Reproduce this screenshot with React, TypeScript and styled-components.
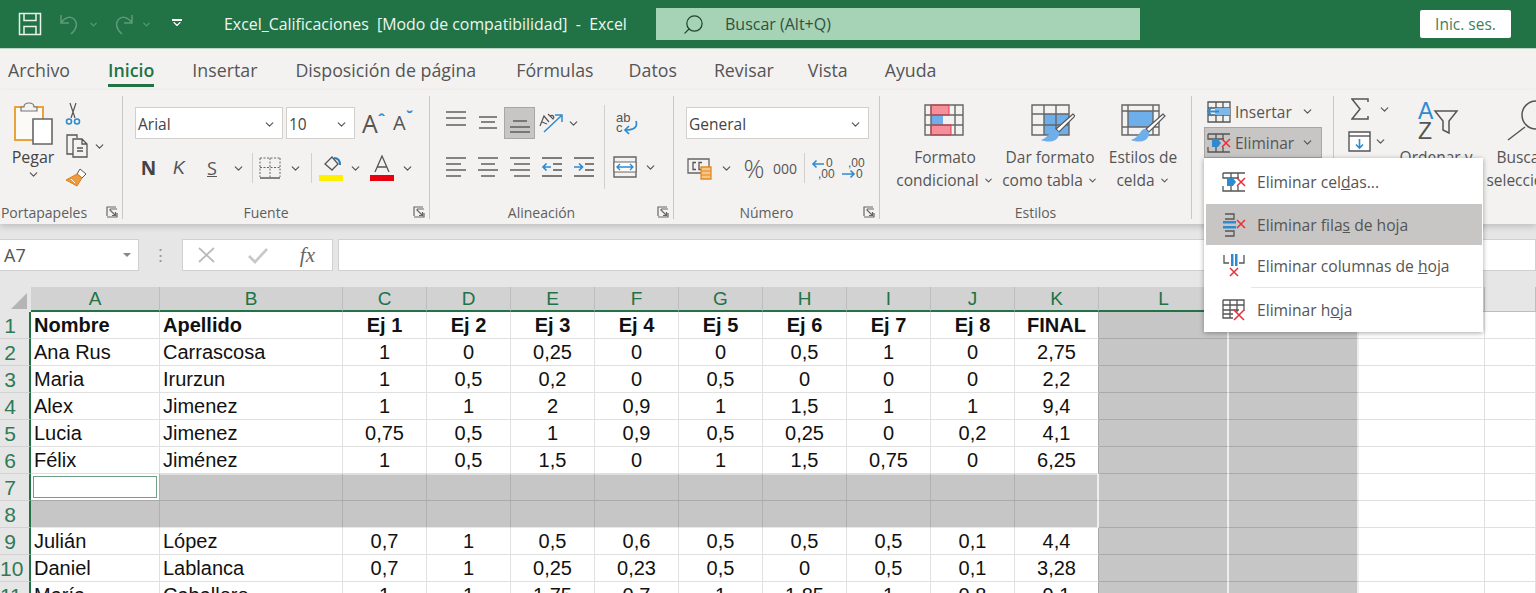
import React from 'react'
import styled, { createGlobalStyle } from 'styled-components'
import { ChevronDown, Search } from 'lucide-react'

const UI = `"Open Sans", "Noto Sans", sans-serif`

const GlobalStyle = createGlobalStyle`
  html, body {
    margin: 0;
    height: 593px;
    overflow: hidden;
    background: #fff;
  }
  body {
    font-family: ${UI};
    color: #444;
  }
  * { box-sizing: border-box; }
`

// M and O sit under the menu or past the visible header in the reference
const columns = [
  { name: 'A', width: 129, on: true },
  { name: 'B', width: 183, on: true },
  { name: 'C', width: 84, on: true },
  { name: 'D', width: 84, on: true },
  { name: 'E', width: 84, on: true },
  { name: 'F', width: 84, on: true },
  { name: 'G', width: 84, on: true },
  { name: 'H', width: 84, on: true },
  { name: 'I', width: 84, on: true },
  { name: 'J', width: 84, on: true },
  { name: 'K', width: 84, on: true },
  { name: 'L', width: 130, on: true },
  { name: '', width: 130, on: true },
  { name: '', width: 126, on: false },
  { name: '', width: 51, on: false },
]

const rows: string[][] = [
  ['Nombre', 'Apellido', 'Ej 1', 'Ej 2', 'Ej 3', 'Ej 4', 'Ej 5', 'Ej 6', 'Ej 7', 'Ej 8', 'FINAL'],
  ['Ana Rus', 'Carrascosa', '1', '0', '0,25', '0', '0', '0,5', '1', '0', '2,75'],
  ['Maria', 'Irurzun', '1', '0,5', '0,2', '0', '0,5', '0', '0', '0', '2,2'],
  ['Alex', 'Jimenez', '1', '1', '2', '0,9', '1', '1,5', '1', '1', '9,4'],
  ['Lucia', 'Jimenez', '0,75', '0,5', '1', '0,9', '0,5', '0,25', '0', '0,2', '4,1'],
  ['Félix', 'Jiménez', '1', '0,5', '1,5', '0', '1', '1,5', '0,75', '0', '6,25'],
  ['', '', '', '', '', '', '', '', '', '', ''],
  ['', '', '', '', '', '', '', '', '', '', ''],
  ['Julián', 'López', '0,7', '1', '0,5', '0,6', '0,5', '0,5', '0,5', '0,1', '4,4'],
  ['Daniel', 'Lablanca', '0,7', '1', '0,25', '0,23', '0,5', '0', '0,5', '0,1', '3,28'],
  ['María', 'Caballero', '1', '1', '1,75', '0,7', '1', '1,85', '1', '0,8', '9,1'],
]

const Chev = ({ size = 13, color = '#555' }: { size?: number; color?: string }) => (
  <ChevronDown size={size} color={color} strokeWidth={2.2} />
)

const Lines = ({ ys, xs }: { ys: number[]; xs: [number, number][] }) => (
  <svg width="24" height="24" viewBox="0 0 24 24" fill="none" stroke="#555" strokeWidth="1.4">
    {ys.map((y, i) => (
      <path key={y} d={`M${xs[i][0]} ${y}H${xs[i][1]}`} />
    ))}
  </svg>
)

const Launcher = () => (
  <svg width="12" height="12" viewBox="0 0 12 12" fill="none" stroke="#666" strokeWidth="1.2">
    <path d="M1 10V1h9M4 3h7M1 11h10v-4M3.500 3.500l6 6M9.500 6v3.500H6" />
  </svg>
)

const SaveIcon = () => (
  <svg width="24" height="24" viewBox="0 0 24 24" fill="none" stroke="#e8f3ec" strokeWidth="1.5">
    <path d="M1.500 1.500h21v21h-21zM6 1.500v7h12v-7M6 22.500v-8h12v8" />
  </svg>
)

const UndoIcon = ({ flip }: { flip?: boolean }) => (
  <svg width="24" height="24" viewBox="0 0 24 24" fill="none" stroke="#5f9b7a" strokeWidth="1.5" style={{ transform: flip ? 'scaleX(-1)' : undefined }}>
    <path d="M3 3v8h8M3 11c4-6 9-7 13-4 4 4 3 10-3 15" />
  </svg>
)

const ClipboardIcon = () => (
  <svg width="44" height="44" viewBox="-3 0 44 44" fill="none">
    <path d="M1 5h28v33H1z" fill="#fbfaf7" stroke="#e8a33d" strokeWidth="2" />
    <path d="M10 5c0-3 2-4 5-4s5 1 5 4h3v4H7V5z" fill="#f3f2f1" stroke="#777" strokeWidth="1.2" />
    <path d="M19 17h19v25H19z" fill="#fff" stroke="#666" strokeWidth="1.6" />
  </svg>
)

const ScissorsIcon = () => (
  <svg width="16" height="24" viewBox="0 0 16 24" fill="none" stroke="#555" strokeWidth="1.2">
    <path d="M5 1l5 15M11 1L6 16" />
    <circle cx="4" cy="19.500" r="2.500" stroke="#2e8bd0" strokeWidth="1.6" />
    <circle cx="12" cy="19.500" r="2.500" stroke="#2e8bd0" strokeWidth="1.6" />
  </svg>
)

const CopyIcon = () => (
  <svg width="24" height="24" viewBox="0 0 24 24" fill="none" stroke="#555" strokeWidth="1.3">
    <path d="M8 20H2V1h10v3" />
    <path d="M8 5h9l5 5v13H8zM17 5v5h5M12 14h6M12 17h6" fill="#f3f2f1" />
  </svg>
)

const BrushIcon = () => (
  <svg width="24" height="24" viewBox="0 0 24 24" fill="none">
    <path d="M15 3l6 5-4 4-5-4z" fill="#fff" stroke="#555" />
    <path d="M12 8l5 4-5 8-11-6z" fill="#ef9b3c" stroke="#d97f1e" />
    <path d="M6 13l4 4" stroke="#fff" />
  </svg>
)

const BordersIcon = () => (
  <svg width="22" height="22" viewBox="0 0 22 22" fill="none" stroke="#666" strokeWidth="1">
    <path d="M1 1h20M1 1v19M21 1v19M11 1v19M1 10.500h20" strokeDasharray="2 1.500" />
    <path d="M1 21h20" strokeWidth="1.600" />
  </svg>
)

const FillIcon = () => (
  <svg width="24" height="26" viewBox="0 0 24 26" fill="none">
    <path d="M6 9l7-7 6 7-6 6z" stroke="#555" strokeWidth="1.300" />
    <path d="M15 3c5 0 6 3 6 7" stroke="#2e7fc0" strokeWidth="2" />
    <path d="M0 20h24v6H0z" fill="#ffef00" />
  </svg>
)

const FontColorIcon = () => (
  <svg width="24" height="26" viewBox="0 0 24 26" fill="none" stroke="#555" strokeWidth="1.300">
    <path d="M5 17L12 1l7 16M7.500 12h9" />
    <path d="M0 20h24v6H0z" fill="#e8000f" stroke="none" />
  </svg>
)

const OrientationIcon = () => (
  <svg width="28" height="24" viewBox="0 0 28 24" fill="none">
    <path d="M7 21L24 5M18 4h7v7" stroke="#2e8bd0" strokeWidth="1.500" />
    <path d="M3 15l4-10 5 6M5 11l5 2M11 3l5 5c2-2 0-5-3-3" stroke="#555" strokeWidth="1.200" />
  </svg>
)

const IndentIcon = ({ right }: { right?: boolean }) => (
  <svg width="24" height="24" viewBox="0 0 24 24" fill="none" stroke="#555" strokeWidth="1.400">
    <path d="M2 3h20M13 9h9M13 15h9M2 21h20" />
    <path d={right ? 'M2 12h8M7 8.500l3.500 3.500L7 15.500' : 'M11 12H3M6.500 8.500L3 12l3.500 3.500'} stroke="#2e8bd0" strokeWidth="1.700" />
  </svg>
)

const WrapIcon = () => (
  <svg width="26" height="28" viewBox="0 -3 26 28" fill="none">
    <text x="1" y="10" fontFamily="Liberation Sans" fontSize="13" fill="#555">ab</text>
    <text x="1" y="20" fontFamily="Liberation Sans" fontSize="13" fill="#555">c</text>
    <path d="M21 9c2 6-2 9-10 9M14 14l-4 4 4 4" stroke="#2e8bd0" strokeWidth="1.700" />
  </svg>
)

const MergeIcon = () => (
  <svg width="24" height="24" viewBox="0 0 24 24" fill="none">
    <path d="M1 2h22v20H1z" stroke="#666" strokeWidth="1.400" />
    <path d="M1 7h22v10H1z" fill="#fff" stroke="#666" />
    <path d="M4 12h16M7 9l-3 3 3 3M17 9l3 3-3 3" stroke="#2e8bd0" strokeWidth="1.400" />
  </svg>
)

const AccountingIcon = () => (
  <svg width="26" height="24" viewBox="0 0 26 24" fill="none">
    <path d="M1 3h21v14H1z" stroke="#666" strokeWidth="1.300" />
    <path d="M9 6.500H6v7h3M15 6.500h-3v7h3" stroke="#555" strokeWidth="1.300" />
    <path d="M14 11h10v12H14z" fill="#f7c58a" stroke="#e08a1e" strokeWidth="1.300" />
    <path d="M14 15h10M14 19h10" stroke="#e08a1e" />
  </svg>
)

const IncreaseDecimalIcon = () => (
  <svg width="25" height="24" viewBox="0 0 25 24" fill="none">
    <text x="15" y="11" fontFamily="Liberation Sans" fontSize="12" fill="#555">0</text>
    <text x="7" y="22" fontFamily="Liberation Sans" fontSize="12" fill="#555">,00</text>
    <path d="M13 8H2M5.500 4.500L2 8l3.500 3.500" stroke="#2e8bd0" strokeWidth="1.600" />
  </svg>
)

const DecreaseDecimalIcon = () => (
  <svg width="25" height="24" viewBox="0 0 25 24" fill="none">
    <text x="7" y="11" fontFamily="Liberation Sans" fontSize="12" fill="#555">,00</text>
    <text x="15" y="22" fontFamily="Liberation Sans" fontSize="12" fill="#555">0</text>
    <path d="M1 18h12M9.500 14.500L13 18l-3.500 3.500" stroke="#2e8bd0" strokeWidth="1.600" />
  </svg>
)

const CondFormatIcon = () => (
  <svg width="42" height="38" viewBox="0 0 42 38" fill="none">
    <path d="M7 1h18v10H7zM7 21h20v10H7z" fill="#f58f99" />
    <path d="M7 11h12v10H7z" fill="#6eaeea" />
    <path d="M1 1h38v30H1zM1 11h38M1 21h38M7 1v30M31 1v30" stroke="#666" strokeWidth="1.400" />
    <path d="M7 1h18v10H7zM7 21h20v10H7z" stroke="#d8404c" />
  </svg>
)

const Paintbrush = () => (
  <g>
    <path d="M42 10L25 25l3 3 16-16z" fill="#fff" stroke="#555" strokeWidth="1.200" />
    <path d="M24 25c-5 0-5 8-14 11 7 3 19 2 18-8z" fill="#6eaeea" />
  </g>
)

const TableFormatIcon = () => (
  <svg width="50" height="38" viewBox="-6 0 50 38" fill="none">
    <path d="M13 10h25v21H13z" fill="#6eaeea" />
    <path d="M1 1h37v30H1zM1 10h37M1 21h37M13 1v30M25 1v30" stroke="#666" strokeWidth="1.400" />
    <Paintbrush />
  </svg>
)

const CellStyleIcon = () => (
  <svg width="50" height="38" viewBox="-3 0 50 38" fill="none">
    <path d="M7 7h25v16H7z" fill="#6eaeea" />
    <path d="M1 1h37v30H1zM1 7h37M1 23h37M7 1v30M32 1v30" stroke="#666" strokeWidth="1.400" />
    <Paintbrush />
  </svg>
)

const Cross = ({ x, y, s = 4 }: { x: number; y: number; s?: number }) => (
  <path d={`M${x - s} ${y - s}l${s * 2} ${s * 2}M${x + s} ${y - s}l-${s * 2} ${s * 2}`} stroke="#e4303c" strokeWidth="1.500" />
)

const InsertCellsIcon = () => (
  <svg width="24" height="22" viewBox="0 0 24 22" fill="none">
    <path d="M1 1h22v20H1zM1 7h22M1 14h22M9 1v20M16 1v20" stroke="#555" strokeWidth="1.300" />
    <path d="M8 7h15v7H8z" fill="#7fb8e8" />
    <path d="M12 10.500H1M5 6l-4 4.500L5 15" stroke="#2e8bd0" strokeWidth="1.800" />
  </svg>
)

const DeleteCellsIcon = () => (
  <svg width="24" height="20" viewBox="0 0 24 20" fill="none">
    <path d="M1 1h22M1 19h22M1 1v5h16M1 14v5h16M9 1v5M9 14v5M16 1v5M16 14v5" stroke="#555" strokeWidth="1.300" />
    <path d="M5 6h6l3 4-3 4H5z" fill="#2e8bd0" />
    <Cross x={19} y={10} />
  </svg>
)

const DeleteRowsIcon = () => (
  <svg width="24" height="24" viewBox="0 0 24 24" fill="none">
    <path d="M3 1h9v5H3M3 23h9v-5H3" stroke="#555" strokeWidth="1.300" />
    <path d="M1 8h13v2.500H1zM1 13h13v2.500H1z" fill="#2e8bd0" />
    <Cross x={19} y={11} />
  </svg>
)

const DeleteColumnsIcon = () => (
  <svg width="24" height="24" viewBox="0 0 24 24" fill="none">
    <path d="M2 1v8h5M22 1v8h-5" stroke="#555" strokeWidth="1.300" />
    <path d="M9 0h2.500v12H9zM13 0h2.500v12H13z" fill="#2e8bd0" />
    <Cross x={12} y={18} />
  </svg>
)

const DeleteSheetIcon = () => (
  <svg width="24" height="22" viewBox="0 0 24 22" fill="none">
    <path d="M1 1h21v11M1 1v18h10M1 6h21M1 11h16M1 15h10M8 1v18M15 1v12" stroke="#555" strokeWidth="1.300" />
    <Cross x={17} y={16} s={5} />
  </svg>
)

const SigmaIcon = () => (
  <svg width="18" height="22" viewBox="0 0 18 22" fill="none" stroke="#555" strokeWidth="1.500">
    <path d="M17 4V1H1l8 10-8 10h16v-3" />
  </svg>
)

const FillDownIcon = () => (
  <svg width="23" height="21" viewBox="0 0 23 21" fill="none">
    <path d="M1 1h21v19H1z" fill="#fff" stroke="#555" strokeWidth="1.400" />
    <path d="M1 5h21" stroke="#555" strokeWidth="1.400" />
    <path d="M11.500 8v9M8 13.500l3.500 3.500 3.500-3.500" stroke="#2e8bd0" strokeWidth="1.600" />
  </svg>
)

const SortIcon = () => (
  <svg width="54" height="42" viewBox="5 0 54 42" fill="none">
    <text x="14" y="19" fontFamily="Liberation Sans" fontSize="23" fill="#2e8bd0">A</text>
    <text x="14" y="39" fontFamily="Liberation Sans" fontSize="23" fill="#555">Z</text>
    <path d="M31 11h22l-8 10v12l-6-3v-9z" stroke="#555" strokeWidth="1.500" />
  </svg>
)

const FindIcon = () => (
  <svg width="46" height="42" viewBox="-3 0 46 42" fill="none" stroke="#555" strokeWidth="1.500">
    <circle cx="29" cy="15" r="14" />
    <path d="M18 27L1 40" />
  </svg>
)

const Footer = ({ label, launcher = true, shift = 0 }: { label: string; launcher?: boolean; shift?: number }) => (
  <GroupFooter>
    <GroupLabel $shift={shift}>{label}</GroupLabel>
    {launcher && <LauncherSlot><Launcher /></LauncherSlot>}
  </GroupFooter>
)

const App = () => {
  return (
    <Page>
      <GlobalStyle />
      <TitleBar>
        <QuickAccess>
          <QuickSlot $left={18}><SaveIcon /></QuickSlot>
          <QuickSlot $left={16}><UndoIcon /></QuickSlot>
          <QuickSlot $left={6}><Chev color="#5f9b7a" size={11} /></QuickSlot>
          <QuickSlot $left={12}><UndoIcon flip /></QuickSlot>
          <QuickSlot $left={6}><Chev color="#5f9b7a" size={11} /></QuickSlot>
          <CustomizeMark>
            <i />
            <Chev color="#fff" size={12} />
          </CustomizeMark>
        </QuickAccess>
        <Title>Excel_Calificaciones&nbsp;&nbsp;[Modo de compatibilidad]&nbsp;&nbsp;-&nbsp;&nbsp;Excel</Title>
        <SearchBox>
          <SearchGlyph><Search size={23} strokeWidth={1.300} color="#20442f" /></SearchGlyph>
          Buscar (Alt+Q)
        </SearchBox>
        <SignIn>Inic. ses.</SignIn>
      </TitleBar>

      <TabBar>
        <Tab $left={8}>Archivo</Tab>
        <Tab $left={38} $active>Inicio</Tab>
        <Tab $left={38}>Insertar</Tab>
        <Tab $left={38}>Disposición de página</Tab>
        <Tab $left={40}>Fórmulas</Tab>
        <Tab $left={35}>Datos</Tab>
        <Tab $left={37}>Revisar</Tab>
        <Tab $left={34}>Vista</Tab>
        <Tab $left={37}>Ayuda</Tab>
      </TabBar>

      <Ribbon>
        <Group $width={123}>
          <ClipboardBody>
            <PasteButton>
              <ClipboardIcon />
              <PasteLabel>Pegar</PasteLabel>
              <Chev />
            </PasteButton>
            <SmallColumn>
              <SmallTool><ScissorsIcon /></SmallTool>
              <SmallTool>
                <CopyIcon />
                <Chev />
              </SmallTool>
              <SmallTool><BrushIcon /></SmallTool>
            </SmallColumn>
          </ClipboardBody>
          <Footer label="Portapapeles" shift={14} />
        </Group>

        <Group $width={307}>
          <ToolStack $left={12}>
            <ToolRow>
              <Select $width={148}>Arial<Chev /></Select>
              <Select $width={69}>10<Chev /></Select>
              <SizeLetter $size={25}>A<sup>ˆ</sup></SizeLetter>
              <SizeLetter $size={20}>A<sup>ˇ</sup></SizeLetter>
            </ToolRow>
            <ToolRow $top={13}>
              <TextTool $width={27}><strong>N</strong></TextTool>
              <TextTool $width={34}><em>K</em></TextTool>
              <TextTool $width={32}><u>S</u></TextTool>
              <Tool $width={20}><Chev /></Tool>
              <Separator />
              <Tool $width={26}><BordersIcon /></Tool>
              <Tool $width={24}><Chev /></Tool>
              <Separator />
              <Tool $width={30}><FillIcon /></Tool>
              <Tool $width={18}><Chev /></Tool>
              <Tool $width={36}><FontColorIcon /></Tool>
              <Tool $width={14}><Chev /></Tool>
            </ToolRow>
          </ToolStack>
          <Footer label="Fuente" />
        </Group>

        <Group $width={244}>
          <AlignBody>
            <ToolStack $left={10}>
              <ToolRow>
                <Tool $width={32}><Lines ys={[1, 7, 14]} xs={[[2, 22], [2, 22], [2, 22]]} /></Tool>
                <Tool $width={32}><Lines ys={[6, 11, 17]} xs={[[3, 21], [5, 19], [3, 21]]} /></Tool>
                <Tool $width={31} $pressed><Lines ys={[10, 16, 21]} xs={[[5, 19], [2, 22], [2, 22]]} /></Tool>
                <Tool $width={31}><OrientationIcon /></Tool>
                <Tool $width={14}><Chev /></Tool>
              </ToolRow>
              <ToolRow $top={12}>
                <Tool $width={32}><Lines ys={[3, 9, 15, 21]} xs={[[2, 22], [2, 17], [2, 22], [2, 17]]} /></Tool>
                <Tool $width={32}><Lines ys={[3, 9, 15, 21]} xs={[[2, 22], [5, 19], [2, 22], [5, 19]]} /></Tool>
                <Tool $width={32}><Lines ys={[3, 9, 15, 21]} xs={[[2, 22], [6, 22], [2, 22], [6, 22]]} /></Tool>
                <Tool $width={32}><IndentIcon /></Tool>
                <Tool $width={32}><IndentIcon right /></Tool>
              </ToolRow>
            </ToolStack>
            <VerticalRule />
            <ToolStack $left={0}>
              <ToolRow><Tool $width={45}><WrapIcon /></Tool></ToolRow>
              <ToolRow $top={12}>
                <Tool $width={40}><MergeIcon /></Tool>
                <Tool $width={10}><Chev /></Tool>
              </ToolRow>
            </ToolStack>
          </AlignBody>
          <Footer label="Alineación" />
        </Group>

        <Group $width={206}>
          <ToolStack $left={12}>
            <ToolRow><Select $width={183}>General<Chev /></Select></ToolRow>
            <ToolRow $top={13}>
              <Tool $width={28}><AccountingIcon /></Tool>
              <Tool $width={24}><Chev /></Tool>
              <TextTool $width={32} $size={26} $light>%</TextTool>
              <TextTool $width={30} $size={14}>000</TextTool>
              <Separator />
              <Tool $width={28}><IncreaseDecimalIcon /></Tool>
              <Tool $width={32}><DecreaseDecimalIcon /></Tool>
            </ToolRow>
          </ToolStack>
          <Footer label="Número" />
        </Group>

        <Group $width={312}>
          <StylesBody>
            <LargeButton $width={110}>
              <CondFormatIcon />
              <LargeText>Formato<br />condicional <Chev size={11} /></LargeText>
            </LargeButton>
            <LargeButton $width={100}>
              <TableFormatIcon />
              <LargeText>Dar formato<br />como tabla <Chev size={11} /></LargeText>
            </LargeButton>
            <LargeButton $width={86}>
              <CellStyleIcon />
              <LargeText>Estilos de<br />celda <Chev size={11} /></LargeText>
            </LargeButton>
          </StylesBody>
          <Footer label="Estilos" launcher={false} />
        </Group>

        <Group $width={142}>
          <CellsBody>
            <CellsRow>
              <InsertCellsIcon />
              Insertar
              <CellsChevron><Chev /></CellsChevron>
            </CellsRow>
            <CellsRow $open>
              <DeleteCellsIcon />
              Eliminar
              <CellsChevron><Chev /></CellsChevron>
            </CellsRow>
          </CellsBody>
        </Group>

        <EditGroup>
          <EditColumn>
            <EditTool $inset={3} $gap={9}><SigmaIcon /><Chev /></EditTool>
            <EditTool $inset={0} $gap={3}><FillDownIcon /><Chev /></EditTool>
          </EditColumn>
          <WideButton $width={76}>
            <SortIcon />
            <LargeText>Ordenar y<br />filtrar</LargeText>
          </WideButton>
          <WideButton $width={106}>
            <FindIcon />
            <LargeText>Buscar y<br />seleccionar</LargeText>
          </WideButton>
        </EditGroup>
      </Ribbon>

      <FormulaBar>
        <NameBox>
          A7
          <NameArrow />
        </NameBox>
        <Grip>⋮</Grip>
        <FormulaTools>
          <svg width="20" height="20" viewBox="0 0 20 20" fill="none" stroke="#bbb" strokeWidth="1.800">
            <path d="M2 3l15 14M17 3L2 17" />
          </svg>
          <svg width="20" height="20" viewBox="0 0 20 20" fill="none" stroke="#c8c8c8" strokeWidth="2.600">
            <path d="M1 11l6 6L19 4" />
          </svg>
          <FxLabel>fx</FxLabel>
        </FormulaTools>
        <FormulaInput />
      </FormulaBar>

      <Sheet>
        <HeaderRow>
          <Corner />
          {columns.map((c, i) => (
            <ColumnHead key={i} $width={c.width} $on={c.on}>{c.name}</ColumnHead>
          ))}
        </HeaderRow>
        {rows.map((row, r) => {
          const blank = r === 6 || r === 7
          return (
            <SheetRow key={r}>
              <RowHead>{r + 1}</RowHead>
              {columns.map((c, i) => {
                const inBlank = blank && i < 11
                return (
                  <Cell
                    key={i}
                    $width={c.width}
                    $grey={i === 11 || i === 12 || inBlank}
                    $bold={r === 0}
                    $left={i < 2}
                    $active={r === 6 && i === 0}
                    $wall={i === 10 ? (blank ? 'light' : 'dark') : i === 11 || i === 12 ? 'gap' : 'none'}
                    $strip={inBlank ? (r === 6 ? 'top' : 'bottom') : 'none'}
                  >
                    {row[i]}
                  </Cell>
                )
              })}
            </SheetRow>
          )
        })}
      </Sheet>

      <Menu>
        <MenuItem $height={44}>
          <MenuIcon><DeleteCellsIcon /></MenuIcon>
          <span>Eliminar cel<u>d</u>as...</span>
        </MenuItem>
        <MenuItem $height={41} $hover>
          <MenuIcon><DeleteRowsIcon /></MenuIcon>
          <span>Eliminar fila<u>s</u> de hoja</span>
        </MenuItem>
        <MenuItem $height={42}>
          <MenuIcon><DeleteColumnsIcon /></MenuIcon>
          <span>Eliminar columnas de <u>h</u>oja</span>
        </MenuItem>
        <MenuRule />
        <MenuItem $height={44}>
          <MenuIcon><DeleteSheetIcon /></MenuIcon>
          <span>Eliminar h<u>o</u>ja</span>
        </MenuItem>
      </Menu>
    </Page>
  )
}

export default App

const Page = styled.div`
  position: relative;
  width: 1536px;
  height: 593px;
  overflow: hidden;
`

const TitleBar = styled.div`
  height: 49px;
  background: #217346;
  border-bottom: 1px solid #b9d6c4;
  display: flex;
  align-items: center;
  color: #fff;
`

const QuickAccess = styled.div`
  width: 224px;
  display: flex;
  align-items: center;
`

const QuickSlot = styled.span<{ $left: number }>`
  margin-left: ${p => p.$left}px;
  display: flex;
`

const CustomizeMark = styled.div`
  margin-left: 19px;
  display: flex;
  flex-direction: column;
  align-items: center;
  i {
    display: block;
    width: 10px;
    height: 2px;
    background: #fff;
  }
  svg { margin-top: -3px; }
`

const Title = styled.div`
  width: 432px;
  font-size: 15.9px;
  color: #eef6f1;
  white-space: nowrap;
`

const SearchBox = styled.div`
  width: 484px;
  height: 32px;
  background: #a6d3b5;
  display: flex;
  align-items: center;
  font-size: 16px;
  color: #33503f;
`

const SearchGlyph = styled.span`
  display: flex;
  padding: 0 20px 0 26px;
  svg { transform: scaleX(-1); }
`

const SignIn = styled.div`
  margin-left: 280px;
  width: 91px;
  height: 28px;
  background: #fff;
  border-radius: 2px;
  color: #3f7f5f;
  font-size: 15.5px;
  display: flex;
  align-items: center;
  justify-content: center;
`

const TabBar = styled.div`
  height: 41px;
  background: #f3f2f1;
  display: flex;
`

const Tab = styled.div<{ $left: number; $active?: boolean }>`
  position: relative;
  margin-left: ${p => p.$left}px;
  padding-top: 9px;
  font-size: 17.8px;
  line-height: 24px;
  color: ${p => (p.$active ? '#217346' : '#555')};
  font-weight: ${p => (p.$active ? 600 : 400)};
  &::after {
    content: '';
    position: absolute;
    left: 0;
    right: 0;
    bottom: 3px;
    height: ${p => (p.$active ? 3 : 0)}px;
    background: #217346;
  }
`

const Ribbon = styled.div`
  height: 134px;
  background: #f3f2f1;
  display: flex;
  box-shadow: 0 3px 6px rgba(0, 0, 0, 0.16);
  position: relative;
`

const Group = styled.div<{ $width: number }>`
  width: ${p => p.$width}px;
  flex: none;
  display: flex;
  flex-direction: column;
  justify-content: space-between;
  margin: 6px 0 5px;
  border-right: 1px solid #c8c8c8;
`

const GroupFooter = styled.div`
  display: flex;
  align-items: center;
  height: 18px;
  margin-bottom: -2px;
`

const GroupLabel = styled.div<{ $shift: number }>`
  flex: 1;
  padding-right: ${p => p.$shift}px;
  text-align: center;
  font-size: 14px;
  color: #605e5c;
  white-space: nowrap;
`

const LauncherSlot = styled.div`
  width: 20px;
  padding-left: 4px;
  display: flex;
  svg { display: block; }
`

const ClipboardBody = styled.div`
  display: flex;
  padding: 6px 0 0 11px;
`

const PasteButton = styled.div`
  width: 44px;
  display: flex;
  flex-direction: column;
  align-items: center;
  gap: 2px;
`

const PasteLabel = styled.div`
  font-size: 16px;
  line-height: 18px;
`

const SmallColumn = styled.div`
  margin-left: 8px;
  display: flex;
  flex-direction: column;
  gap: 8px;
`

const SmallTool = styled.div`
  height: 24px;
  display: flex;
  align-items: center;
  gap: 4px;
  padding-left: 2px;
`

const ToolStack = styled.div<{ $left: number }>`
  padding: 11px 0 0 ${p => p.$left}px;
  display: flex;
  flex-direction: column;
`

const ToolRow = styled.div<{ $top?: number }>`
  display: flex;
  align-items: center;
  margin-top: ${p => p.$top ?? 0}px;
  min-height: 32px;
`

const Select = styled.div<{ $width: number }>`
  width: ${p => p.$width}px;
  height: 32px;
  margin-right: 3px;
  padding: 2px 6px 0 2px;
  background: #fff;
  border: 1px solid #d2d0ce;
  display: flex;
  align-items: center;
  justify-content: space-between;
  font-size: 15.5px;
  color: #444;
`

const SizeLetter = styled.div<{ $size: number }>`
  width: 31px;
  padding-left: 4px;
  font-size: ${p => p.$size}px;
  line-height: 28px;
  color: #555;
  sup {
    font-size: 15px;
    line-height: 0;
    color: #2e8bd0;
    font-weight: 700;
    vertical-align: 8px;
  }
`

const Tool = styled.div<{ $width: number; $pressed?: boolean }>`
  width: ${p => p.$width}px;
  height: 32px;
  flex: none;
  display: flex;
  align-items: center;
  justify-content: center;
  background: ${p => (p.$pressed ? '#c8c6c4' : 'transparent')};
  border: ${p => (p.$pressed ? '1px solid #a9a7a5' : '0')};
  svg { flex: none; }
`

const TextTool = styled(Tool)<{ $size?: number; $light?: boolean }>`
  font-size: ${p => p.$size ?? 18}px;
  font-weight: ${p => (p.$light ? 300 : 400)};
  color: #555;
  strong { color: #444; font-size: 19px; font-weight: 700; }
  em { font-family: "Liberation Sans", sans-serif; }
`

const Separator = styled.div`
  width: 1px;
  height: 30px;
  margin: 0 4px;
  background: #d2d0ce;
`

const AlignBody = styled.div`
  display: flex;
`

const VerticalRule = styled.div`
  width: 1px;
  height: 84px;
  margin: 9px 0 0 4px;
  background: #d2d0ce;
`

const StylesBody = styled.div`
  display: flex;
  padding: 8px 0 0 10px;
`

const LargeButton = styled.div<{ $width: number }>`
  width: ${p => p.$width}px;
  flex: none;
  display: flex;
  flex-direction: column;
  align-items: center;
  svg { flex: none; }
`

const LargeText = styled.div`
  margin-top: 4px;
  font-size: 15.5px;
  line-height: 23px;
  text-align: center;
  white-space: nowrap;
  color: #555;
`

const CellsBody = styled.div`
  display: flex;
  flex-direction: column;
  padding: 0 11px 0 12px;
`

const CellsRow = styled.div<{ $open?: boolean }>`
  height: 31px;
  display: flex;
  align-items: center;
  gap: 4px;
  padding-left: 2px;
  font-size: 15.5px;
  color: #555;
  background: ${p => (p.$open ? '#c8c6c4' : 'transparent')};
  border: 1px solid ${p => (p.$open ? '#a9a7a5' : 'transparent')};
`

const CellsChevron = styled.span`
  margin-left: auto;
  padding-right: 7px;
  display: flex;
`

const EditGroup = styled.div`
  flex: none;
  display: flex;
  margin-top: 6px;
  padding-left: 14px;
`

const EditColumn = styled.div`
  width: 50px;
  display: flex;
  flex-direction: column;
  gap: 6px;
`

const EditTool = styled.div<{ $inset: number; $gap: number }>`
  display: flex;
  align-items: center;
  padding-left: ${p => p.$inset}px;
  gap: ${p => p.$gap}px;
  height: 26px;
`

const WideButton = styled(LargeButton)`
  padding-top: 4px;
`

const FormulaBar = styled.div`
  height: 63px;
  background: #e6e6e6;
  display: flex;
  padding: 15px 0 16px;
`

const NameBox = styled.div`
  width: 141px;
  margin-left: -2px;
  background: #fff;
  border: 1px solid #d2d0ce;
  padding-left: 5px;
  display: flex;
  align-items: center;
  justify-content: space-between;
  font-size: 18px;
  color: #555;
`

const NameArrow = styled.i`
  margin-right: 7px;
  border-left: 4px solid transparent;
  border-right: 4px solid transparent;
  border-top: 4px solid #888;
`

const Grip = styled.div`
  width: 43px;
  text-align: center;
  font-size: 17px;
  line-height: 32px;
  color: #999;
`

const FormulaTools = styled.div`
  width: 151px;
  background: #fff;
  border: 1px solid #d2d0ce;
  display: flex;
  align-items: center;
  justify-content: space-between;
  padding: 0 17px 0 14px;
`

const FxLabel = styled.span`
  font-family: "Liberation Serif", serif;
  font-style: italic;
  font-size: 21px;
  color: #666;
`

const FormulaInput = styled.div`
  flex: 1;
  margin-left: 5px;
  background: #fff;
  border: 1px solid #d2d0ce;
`

const Sheet = styled.div`
  font-family: "Liberation Sans", Arial, sans-serif;
`

const HeaderRow = styled.div`
  height: 25px;
  display: flex;
  background: #e6e6e6;
`

const Corner = styled.div`
  width: 31px;
  flex: none;
  position: relative;
  &::after {
    content: '';
    position: absolute;
    right: 4px;
    bottom: 3px;
    border-left: 16px solid transparent;
    border-bottom: 16px solid #b5b5b5;
  }
`

const ColumnHead = styled.div<{ $width: number; $on: boolean }>`
  width: ${p => p.$width}px;
  flex: none;
  font-size: 19px;
  line-height: 24px;
  text-align: center;
  color: ${p => (p.$on ? '#217346' : '#555')};
  background: ${p => (p.$on ? '#d2d2d2' : '#e6e6e6')};
  border-right: 1px solid #bdbdbd;
  border-bottom: ${p => (p.$on ? '2px solid #217346' : '1px solid #bdbdbd')};
`

const SheetRow = styled.div`
  height: 27px;
  display: flex;
`

const RowHead = styled.div`
  width: 31px;
  flex: none;
  padding-right: 9px;
  background: #e6e6e6;
  color: #2f7a56;
  font-size: 21px;
  line-height: 27px;
  text-align: center;
  white-space: nowrap;
  border-right: 2px solid #217346;
  border-bottom: 1px solid #d2d2d2;
`

const wallColors: Record<string, string> = {
  dark: '1px solid #a9a9a9',
  light: '2px solid #eee',
  gap: '2px solid #eee',
}

const Cell = styled.div<{
  $width: number
  $grey: boolean
  $bold: boolean
  $left: boolean
  $active: boolean
  $wall: string
  $strip: string
}>`
  width: ${p => p.$width}px;
  flex: none;
  padding: 0 3px;
  font-size: 20px;
  line-height: 27px;
  color: #111;
  white-space: nowrap;
  font-weight: ${p => (p.$bold ? 700 : 400)};
  text-align: ${p => (p.$left ? 'left' : 'center')};
  background: ${p => (p.$active ? '#fff' : p.$grey ? '#c6c6c6' : '#fff')};
  border-right: ${p => wallColors[p.$wall] ?? `1px solid ${p.$grey ? '#b0b0b0' : '#e0e0e0'}`};
  border-bottom: 1px solid ${p => (p.$strip === 'bottom' ? '#e8e8e8' : p.$grey ? '#aaa' : '#e0e0e0')};
  ${p => p.$strip === 'top' && 'box-shadow: inset 0 1px 0 #dedede;'}
  ${p => p.$active && 'box-shadow: inset 0 0 0 2px #fff, inset 0 0 0 3px #6f9f84;'}
`

const Menu = styled.div`
  position: absolute;
  left: 1204px;
  top: 158px;
  width: 279px;
  height: 174px;
  padding: 2px 1px 0 2px;
  background: #fff;
  box-shadow: 0 1px 5px rgba(0, 0, 0, 0.35);
`

const MenuItem = styled.div<{ $height: number; $hover?: boolean }>`
  height: ${p => p.$height}px;
  display: flex;
  align-items: center;
  font-size: 15.65px;
  color: #555;
  background: ${p => (p.$hover ? '#c8c6c4' : 'transparent')};
`

const MenuIcon = styled.span`
  width: 51px;
  flex: none;
  padding-left: 16px;
  display: flex;
`

const MenuRule = styled.div`
  height: 1px;
  margin-left: 45px;
  background: #e6e6e6;
`
